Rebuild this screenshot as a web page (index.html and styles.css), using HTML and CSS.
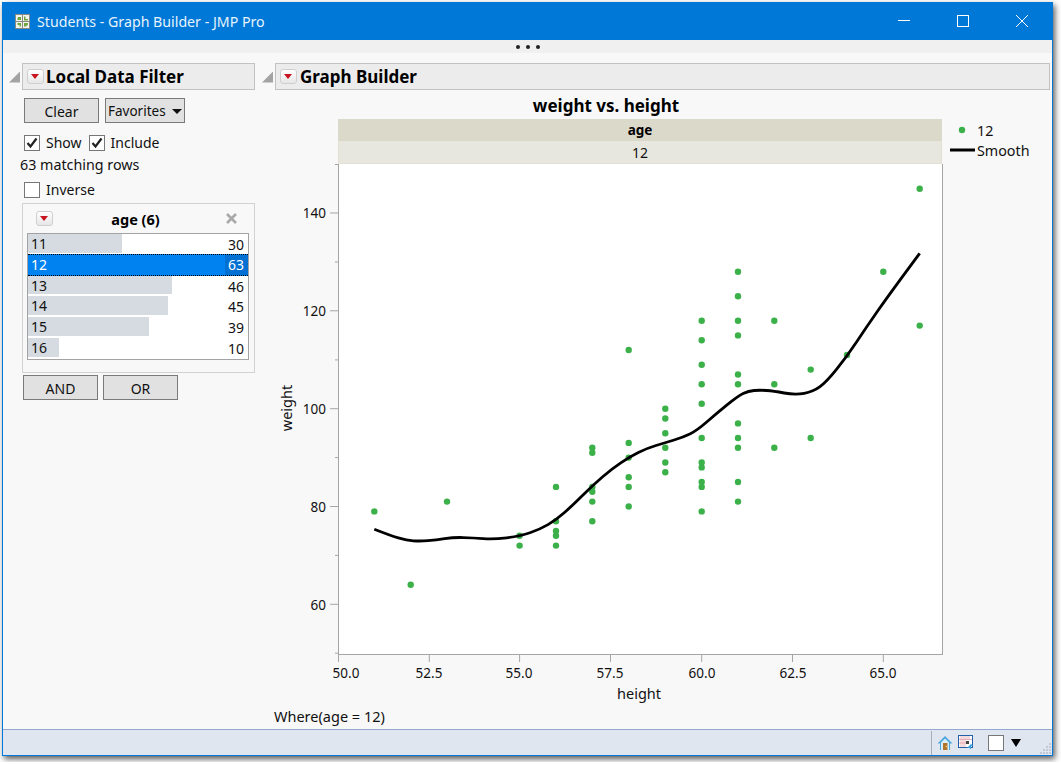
FILE: index.html
```html
<!DOCTYPE html>
<html lang="en">
<head>
<meta charset="utf-8">
<title>Students - Graph Builder - JMP Pro</title>
<link rel="stylesheet" href="styles.css">
</head>
<body>
<div class="window">
  <header class="titlebar">
    <svg class="app-icon" width="15" height="15" viewBox="0 0 15 15"><rect x=".5" y=".5" width="14" height="14" fill="#f4f4ee" stroke="#8a8a80"/><path d="M7.5 1v13M1 7.5h13" stroke="#8a8a80"/><path d="M3 3h3v3H2.500V4.500zM9 2.500h1.500V5H13v1.500H9zM2.500 9H6v3.500H4.500V11h-2zM9 9h4v1.500l-2 2H9z" fill="#6fa53c"/></svg>
    <span class="title-text">Students - Graph Builder - JMP Pro</span>
    <div class="win-controls">
      <svg class="win-btn" width="59" height="38" viewBox="0 0 59 38"><path d="M23 18.500h12" stroke="#fff"/></svg>
      <svg class="win-btn" width="59" height="38" viewBox="0 0 59 38"><rect x="23.500" y="13.500" width="11" height="11" fill="none" stroke="#fff"/></svg>
      <svg class="win-btn" width="59" height="38" viewBox="0 0 59 38"><path d="M23 13l12 12M35 13L23 25" stroke="#fff" fill="none"/></svg>
    </div>
  </header>
  <div class="dotsbar"><span class="dot"></span><span class="dot"></span><span class="dot"></span></div>
  <main class="content">
    <section class="left">
      <div class="outline">
        <span class="disclosure"></span>
        <div class="outline-head"><span class="red-btn"></span><span class="outline-title">Local Data Filter</span></div>
      </div>
      <div class="filter-body">
        <div class="btn-row">
          <button class="btn btn-clear">Clear</button>
          <div class="btn btn-fav">Favorites<span class="caret"></span></div>
        </div>
        <div class="check-row first">
          <span class="check"><svg width="14" height="14" viewBox="0 0 14 14"><path d="M2.500 7l3 3.500 6-8" fill="none" stroke="#222" stroke-width="2.200"/></svg></span><span class="check-label">Show</span>
          <span class="check"><svg width="14" height="14" viewBox="0 0 14 14"><path d="M2.500 7l3 3.500 6-8" fill="none" stroke="#222" stroke-width="2.200"/></svg></span><span class="check-label">Include</span>
        </div>
        <div class="matching">63 matching rows</div>
        <div class="check-row inverse"><span class="check"></span><span class="check-label">Inverse</span></div>
        <div class="age-box">
          <div class="age-head">
            <span class="red-btn"></span>
            <span class="age-title">age (6)</span>
            <svg class="age-close" width="13" height="13" viewBox="0 0 13 13"><path d="M2 2l9 9M11 2l-9 9" stroke="#a9a9a9" stroke-width="2.600"/></svg>
          </div>
          <div class="age-list">
            <div class="age-row"><span class="bar" style="width:94px"></span><span class="age-label">11</span><span class="age-count">30</span></div>
            <div class="age-row selected"><span class="age-label">12</span><span class="age-count">63</span></div>
            <div class="age-row"><span class="bar" style="width:144px"></span><span class="age-label">13</span><span class="age-count">46</span></div>
            <div class="age-row"><span class="bar" style="width:140px"></span><span class="age-label">14</span><span class="age-count">45</span></div>
            <div class="age-row"><span class="bar" style="width:121px"></span><span class="age-label">15</span><span class="age-count">39</span></div>
            <div class="age-row"><span class="bar" style="width:31px"></span><span class="age-label">16</span><span class="age-count">10</span></div>
          </div>
        </div>
        <div class="btn-row logic">
          <button class="btn btn-logic">AND</button>
          <button class="btn btn-logic">OR</button>
        </div>
      </div>
    </section>
    <section class="right">
      <div class="outline">
        <span class="disclosure"></span>
        <div class="outline-head"><span class="red-btn"></span><span class="outline-title">Graph Builder</span></div>
      </div>
      <h1 class="graph-title">weight vs. height</h1>
      <div class="graph-row">
        <div class="chart">
          <div class="strip strip-name">age</div>
          <div class="strip strip-value">12</div>
          <svg class="plot" width="668" height="544" viewBox="275 164 668 544">
            <rect x="338" y="164" width="604" height="491" fill="#fff"/>
            <path class="axis" d="M338.500 164v498M338 654.500h604M942.500 164v491"/>
            <path class="axis" d="M335 164.500h3M330 213h8M335 262h3M330 310.800h8M335 359.900h3M330 408.700h8M335 457.600h3M330 506.500h8M335 555.400h3M330 604.300h8M335 653.200h3M429.300 654v8M519.600 654v8M610.500 654v8M701.700 654v8M792.500 654v8M883.300 654v8"/>
            <g class="tick-y">
              <text x="326" y="218">140</text>
              <text x="326" y="316">120</text>
              <text x="326" y="414">100</text>
              <text x="326" y="512">80</text>
              <text x="326" y="610">60</text>
            </g>
            <g class="tick-x">
              <text x="346" y="678">50.0</text>
              <text x="429" y="678">52.5</text>
              <text x="519" y="678">55.0</text>
              <text x="610" y="678">57.5</text>
              <text x="702" y="678">60.0</text>
              <text x="793" y="678">62.5</text>
              <text x="883" y="678">65.0</text>
            </g>
            <text class="axis-title" x="639" y="699">height</text>
            <text class="axis-title" transform="translate(292 408) rotate(-90)">weight</text>
            <g class="points">
              <circle cx="374.300" cy="511.400" r="3.200"/>
              <circle cx="410.700" cy="584.700" r="3.200"/>
              <circle cx="447" cy="501.600" r="3.200"/>
              <circle cx="519.600" cy="535.800" r="3.200"/><circle cx="519.600" cy="545.600" r="3.200"/>
              <circle cx="556" cy="486.900" r="3.200"/><circle cx="556" cy="521.200" r="3.200"/><circle cx="556" cy="530.900" r="3.200"/><circle cx="556" cy="535.800" r="3.200"/><circle cx="556" cy="545.600" r="3.200"/>
              <circle cx="592.300" cy="447.800" r="3.200"/><circle cx="592.300" cy="452.700" r="3.200"/><circle cx="592.300" cy="486.900" r="3.200"/><circle cx="592.300" cy="491.800" r="3.200"/><circle cx="592.300" cy="501.600" r="3.200"/><circle cx="592.300" cy="521.200" r="3.200"/>
              <circle cx="628.700" cy="350" r="3.200"/><circle cx="628.700" cy="442.900" r="3.200"/><circle cx="628.700" cy="457.600" r="3.200"/><circle cx="628.700" cy="477.200" r="3.200"/><circle cx="628.700" cy="486.900" r="3.200"/><circle cx="628.700" cy="506.500" r="3.200"/>
              <circle cx="665.300" cy="408.700" r="3.200"/><circle cx="665.300" cy="418.500" r="3.200"/><circle cx="665.300" cy="433.200" r="3.200"/><circle cx="665.300" cy="447.800" r="3.200"/><circle cx="665.300" cy="462.500" r="3.200"/><circle cx="665.300" cy="472.300" r="3.200"/>
              <circle cx="701.700" cy="320.700" r="3.200"/><circle cx="701.700" cy="340.200" r="3.200"/><circle cx="701.700" cy="364.700" r="3.200"/><circle cx="701.700" cy="384.300" r="3.200"/><circle cx="701.700" cy="403.800" r="3.200"/><circle cx="701.700" cy="438" r="3.200"/><circle cx="701.700" cy="462.500" r="3.200"/><circle cx="701.700" cy="467.400" r="3.200"/><circle cx="701.700" cy="482" r="3.200"/><circle cx="701.700" cy="486.900" r="3.200"/><circle cx="701.700" cy="511.400" r="3.200"/>
              <circle cx="738" cy="271.800" r="3.200"/><circle cx="738" cy="296.200" r="3.200"/><circle cx="738" cy="320.700" r="3.200"/><circle cx="738" cy="335.400" r="3.200"/><circle cx="738" cy="374.500" r="3.200"/><circle cx="738" cy="384.300" r="3.200"/><circle cx="738" cy="423.400" r="3.200"/><circle cx="738" cy="438" r="3.200"/><circle cx="738" cy="447.800" r="3.200"/><circle cx="738" cy="482" r="3.200"/><circle cx="738" cy="501.600" r="3.200"/>
              <circle cx="774.300" cy="320.700" r="3.200"/><circle cx="774.300" cy="384.300" r="3.200"/><circle cx="774.300" cy="447.800" r="3.200"/>
              <circle cx="810.700" cy="369.600" r="3.200"/><circle cx="810.700" cy="438" r="3.200"/>
              <circle cx="847" cy="354.900" r="3.200"/>
              <circle cx="883.300" cy="271.800" r="3.200"/>
              <circle cx="919.700" cy="188.700" r="3.200"/><circle cx="919.700" cy="325.600" r="3.200"/>
            </g>
            <path class="smooth" d="M374.300 529.300Q390 535.500 398.350 537.900Q406.700 540.300 413.350 540.800Q420 541.300 428 540.650Q436 540 444.650 538.650Q453.300 537.300 463.150 537.550Q473 537.800 483.150 538.550Q493.300 539.300 506.650 537.800Q520 536.300 530 532.800Q540 529.300 548 524.650Q556 520 564.500 512.500Q573 505 583 495Q593 485 603 476.500Q613 468 621.500 462.350Q630 456.700 638.350 452.500Q646.700 448.300 656 445.500Q665.300 442.700 674.150 440Q683 437.300 689.850 434Q696.700 430.700 706.700 422Q716.700 413.300 727.350 404.650Q738 396 743.150 393.500Q748.300 391 754.150 390.500Q760 390 766.650 390.500Q773.300 391 784.150 393Q795 395 804.150 393.350Q813.300 391.700 820 386.700Q826.700 381.700 836.700 369.200Q846.700 356.700 856.700 341.700Q866.700 326.700 878.350 310Q890 293.300 919.700 253.300"/>
          </svg>
        </div>
        <aside class="legend">
          <div class="legend-item"><svg width="25" height="8" viewBox="0 0 25 8"><circle cx="12" cy="4" r="3.200" fill="#3cb14a"/></svg><span class="legend-label">12</span></div>
          <div class="legend-item"><svg width="25" height="8" viewBox="0 0 25 8"><path d="M0 4h25" stroke="#000" stroke-width="3"/></svg><span class="legend-label">Smooth</span></div>
        </aside>
      </div>
      <div class="where">Where(age = 12)</div>
    </section>
  </main>
  <footer class="statusbar">
    <span class="status-sep"></span>
    <svg class="home" width="16" height="16" viewBox="0 0 16 16"><path d="M8 1L.5 8.500H3V15h10V8.500h2.500z" fill="#4aa6dc"/><path d="M8 3.500L4 7.500V15h8V7.500z" fill="#d9eefa"/><rect x="6" y="8" width="4.500" height="7" fill="#b0752a"/><circle cx="9.300" cy="11.500" r=".7" fill="#f5dc9c"/></svg>
    <svg class="table-icon" width="16" height="16" viewBox="0 0 16 16"><rect x=".5" y=".5" width="14" height="12" fill="#fff" stroke="#2360a8"/><path d="M1 4.500h13M1 8h7M5 1v11M9 1v4M3 1v11M7 1v11M11 1v4" stroke="#e2a0a8" stroke-width=".8"/><rect x="8" y="6" width="3" height="3" fill="#444"/><path d="M9 13l2-2 2-2 2 1.500-2 1v3l-1.500-1.500z" fill="#3aa0dc"/></svg>
    <span class="status-box"></span>
    <span class="status-caret"></span>
    <svg class="grip" width="14" height="14" viewBox="0 0 14 14"><g fill="#c3c9d4"><rect x="11" y="2" width="2" height="2"/><rect x="8" y="5" width="2" height="2"/><rect x="11" y="5" width="2" height="2"/><rect x="5" y="8" width="2" height="2"/><rect x="8" y="8" width="2" height="2"/><rect x="11" y="8" width="2" height="2"/><rect x="2" y="11" width="2" height="2"/><rect x="5" y="11" width="2" height="2"/><rect x="8" y="11" width="2" height="2"/><rect x="11" y="11" width="2" height="2"/></g></svg>
  </footer>
</div>
</body>
</html>
```
FILE: styles.css
```css
html, body { margin: 0; padding: 0; background: #fff; }
body { padding: 2px 0 0 2px; height: 762px; box-sizing: border-box; overflow: hidden;
  font-family: "Noto Sans", "Open Sans", sans-serif; font-size: 14px; color: #111; }
.window { width: 1051px; height: 754px; box-sizing: border-box; display: flex; flex-direction: column;
  border: 1px solid #0078d7; border-top: 0; background: #f8f8f8; box-shadow: 2px 3px 6px rgba(0,0,0,.65); }

.titlebar { height: 38px; flex: none; background: #0078d7; color: #fff; display: flex; align-items: center; padding-left: 12px; }
.app-icon { flex: none; margin-right: 7px; }
.title-text { font-size: 14.200px; color: #e8f3fc; }
.win-controls { margin-left: auto; display: flex; }
.win-btn { display: block; }

.dotsbar { height: 13px; flex: none; background: #f0f0f0; display: flex; justify-content: center; align-items: center; gap: 6px; }
.dot { width: 4px; height: 4px; border-radius: 50%; background: #222; }

.content { flex: 1; display: flex; padding-top: 10px; min-height: 0; }
.left { width: 258px; flex: none; padding: 0 6px; box-sizing: border-box; }
.right { flex: 1; padding-left: 1px; padding-right: 2px; min-width: 0; }

.outline { display: flex; align-items: center; }
.disclosure { width: 13px; height: 12px; flex: none; position: relative; }
.disclosure::before { content: ""; position: absolute; left: 0; top: 1px; width: 11px; height: 11px; background: #a3a3a3; clip-path: polygon(100% 0, 100% 100%, 0 100%); }
.outline-head { flex: 1; height: 27px; box-sizing: border-box; background: #ececec; border: 1px solid #c2c2c2; display: flex; align-items: center; padding-left: 4px; }
.outline-title { font-size: 17px; font-weight: 700; color: #000; margin-left: 2px; }
.right .outline-title { margin-left: 3px; }
.red-btn { width: 17px; height: 15px; box-sizing: border-box; flex: none; border: 1px solid #cfcfcf; border-radius: 3px; background: linear-gradient(#fff, #e6e6e6); position: relative; display: block; }
.red-btn::after { content: ""; position: absolute; left: 3px; top: 4px; border: 4.500px solid transparent; border-top: 5px solid #c8141e; border-bottom: 0; }

.filter-body { margin-left: 11px; width: 235px; }
.btn-row { display: flex; gap: 6px; margin-top: 8px; padding-left: 4px; }
.btn { height: 25px; box-sizing: border-box; background: #e1e1e1; border: 1px solid #7a7a7a; font: inherit; color: #111; padding: 1px 0 0; display: flex; align-items: center; justify-content: center; }
.btn-clear { width: 75px; }
.btn-fav { width: 80px; justify-content: flex-start; padding-left: 2px; font-size: 13.500px; }
.caret { margin-left: 6px; border: 5px solid transparent; border-top: 5px solid #111; border-bottom: 0; }

.check-row { display: flex; align-items: center; height: 20px; padding-left: 4px; }
.check-row.first { margin-top: 10px; }
.check-row.inverse { margin-top: 5px; }
.check { width: 16px; height: 16px; box-sizing: border-box; flex: none; background: #fff; border: 1px solid #777; display: block; }
.check svg { display: block; }
.check-label { margin-left: 6px; margin-right: 7px; padding-bottom: 2px; }
.matching { height: 20px; margin-top: 2px; line-height: 20px; font-size: 14.300px; }

.age-box { margin: 3px 0 0 2px; width: 233px; box-sizing: border-box; border: 1px solid #d2d2d2; background: #f8f8f8; padding: 0 5px 12px 4px; }
.age-head { height: 29px; display: flex; align-items: center; position: relative; padding-left: 9px; }
.age-head .red-btn { margin-top: -1px; }
.age-title { position: absolute; left: 0; right: 5px; text-align: center; font-weight: 700; font-size: 14.500px; color: #000; margin-top: 1px; }
.age-close { position: absolute; left: 198px; top: 8px; }
.age-list { border: 1px solid #a3a3a3; background: #fff; height: 127px; box-sizing: border-box; width: 222px; }
.age-row { height: 20.830px; display: flex; justify-content: space-between; padding: 0 4px 0 3px; position: relative; line-height: 20px; }
.bar { position: absolute; left: 0; top: 0; bottom: 2px; background: #d5dbe0; }
.age-label, .age-count { position: relative; }
.age-count { top: 1px; }
.age-row.selected { background: #0082f0; color: #fff; border-top: 1px dotted #000; border-bottom: 1px dotted #000; margin-top: -1px; box-sizing: border-box; height: 21.830px; }
.age-row.selected .age-count { background: #0070d2; position: absolute; right: 0; top: 0; bottom: 0; width: 23px; padding-left: 3px; box-sizing: border-box; line-height: 20px; }

.btn-row.logic { margin-top: 2px; gap: 5px; padding-left: 3px; }
.btn-logic { width: 75px; }

.graph-title { margin: 4px 0 2px; height: 23px; line-height: 23px; font-size: 17px; font-weight: 700; color: #000; text-align: center; width: 688px; }
.graph-row { display: flex; height: 588px; }
.chart { width: 681px; padding-left: 13px; box-sizing: border-box; flex: none; }
.strip { margin-left: 63px; width: 604px; box-sizing: border-box; text-align: center; }
.strip-name { height: 22px; line-height: 22px; background: #dbd9ca; font-weight: 700; font-size: 13.500px; color: #000; }
.strip-value { height: 23px; line-height: 23px; background: #e7e7df; border: 1px solid #e2e1d4; border-width: 0 1px 1px; }
.plot { display: block; }
.axis { fill: none; stroke: #a5a5a5; stroke-width: 1; }
.tick-y text { text-anchor: end; }
.tick-x text, .axis-title { text-anchor: middle; }
.plot text { font-size: 13.500px; fill: #111; }
.plot .axis-title { font-size: 14.500px; }
.points { fill: #3cb14a; }
.smooth { fill: none; stroke: #000; stroke-width: 2.800; }

.legend { margin-left: 7px; padding-top: 1px; display: flex; flex-direction: column; }
.legend-item { display: flex; align-items: center; height: 20px; }
.legend-item svg { flex: none; }
.legend-label { margin-left: 2px; font-size: 14.300px; }

.where { height: 18px; line-height: 18px; margin-left: 12px; font-size: 14.500px; }

.statusbar { height: 26px; flex: none; box-sizing: border-box; background: #e0e6f0; border-top: 1px solid #93a9d2; display: flex; align-items: center; }
.status-sep { margin-left: auto; width: 1px; height: 24px; background: #a9adb5; margin-right: 5px; }
.home { flex: none; margin-right: 5px; }
.table-icon { flex: none; margin-right: 14px; }
.status-box { width: 16px; height: 16px; box-sizing: border-box; background: #fff; border: 1px solid #777; }
.status-caret { margin-left: 7px; margin-right: 17px; border: 5.500px solid transparent; border-top: 8px solid #000; border-bottom: 0; }
.grip { flex: none; align-self: flex-end; }
```
